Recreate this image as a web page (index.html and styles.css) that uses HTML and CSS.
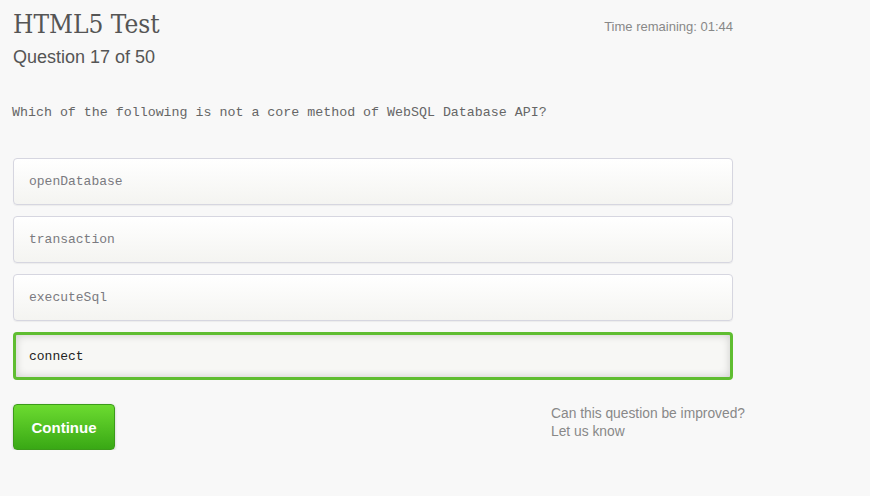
FILE: index.html
```html
<!DOCTYPE html>
<html>
<head>
<meta charset="utf-8">
<link rel="stylesheet" href="styles.css">
</head>
<body>
<div class="page">
  <header class="head">
    <div class="titles">
      <h1 class="title">HTML5 Test</h1>
      <h2 class="subtitle">Question 17 of 50</h2>
    </div>
    <div class="timer">Time remaining: 01:44</div>
  </header>
  <p class="question">Which of the following is not a core method of WebSQL Database API?</p>
  <div class="options">
    <div class="option">openDatabase</div>
    <div class="option">transaction</div>
    <div class="option">executeSql</div>
    <div class="option selected">connect</div>
  </div>
  <div class="actions">
    <button class="continue">Continue</button>
    <div class="feedback">
      <div>Can this question be improved?</div>
      <div>Let us know</div>
    </div>
  </div>
</div>
</body>
</html>
```
FILE: styles.css
```css
html, body {
  margin: 0;
  padding: 0;
  background: #f8f8f8;
}
.page {
  width: 720px;
  padding: 8px 0 0 13px;
  font-family: "Liberation Sans", Arial, sans-serif;
}
.head {
  display: flex;
  justify-content: space-between;
  align-items: flex-start;
}
.title {
  margin: 0;
  font-family: "DejaVu Serif", serif;
  font-stretch: condensed;
  font-weight: normal;
  font-size: 26px;
  line-height: 32px;
  color: #555;
}
.subtitle {
  margin: 6px 0 0;
  font-weight: normal;
  font-size: 18px;
  line-height: 22px;
  color: #555;
}
.timer {
  margin-top: 11px;
  font-size: 13px;
  color: #888;
}
.question {
  margin: 37px 0 0 -1px;
  font-family: "Liberation Mono", "Courier New", monospace;
  font-size: 13.3px;
  line-height: 16px;
  color: #666;
}
.options {
  margin-top: 37px;
  display: flex;
  flex-direction: column;
  gap: 11px;
}
.option {
  box-sizing: border-box;
  height: 47px;
  padding: 0 15px;
  display: flex;
  align-items: center;
  border: 1px solid #d6d6e0;
  border-radius: 4px;
  background: linear-gradient(#ffffff, #f4f4f1);
  box-shadow: 0 1px 1px rgba(0,0,0,0.05);
  font-family: "Liberation Mono", "Courier New", monospace;
  font-size: 13px;
  color: #7a7a80;
}
.option.selected {
  height: 48px;
  border: 3px solid #5fbd31;
  padding: 0 13px;
  background: #f7f7f5;
  box-shadow: inset 0 0 8px rgba(0,0,0,0.18);
  color: #222;
}
.actions {
  margin-top: 24px;
  display: grid;
  grid-template-columns: 538px auto;
  align-items: start;
}
.continue {
  width: 102px;
  height: 46px;
  border: 1px solid #3c9b1a;
  border-radius: 4px;
  background: linear-gradient(#6cdb30, #39a815);
  box-shadow: 0 1px 3px rgba(0,0,0,0.2);
  color: #fff;
  font-family: "Liberation Sans", Arial, sans-serif;
  font-weight: bold;
  font-size: 15px;
  padding: 0;
}
.feedback {
  margin-top: 1px;
  font-size: 13.8px;
  line-height: 18px;
  color: #888;
  white-space: nowrap;
}
```
